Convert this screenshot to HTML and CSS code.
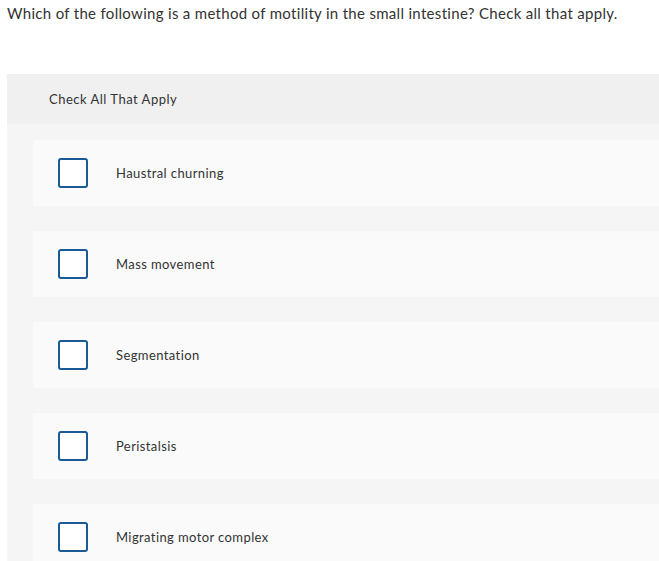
FILE: index.html
```html
<!DOCTYPE html>
<html>
<head>
<meta charset="utf-8">
<link rel="stylesheet" href="styles.css">
</head>
<body>
<p class="question">Which of the following is a method of motility in the small intestine? Check all that apply.</p>
<div class="panel">
  <div class="panel-head">Check All That Apply</div>
  <div class="panel-body">
    <label class="choice"><span class="box"></span><span class="label">Haustral churning</span></label>
    <label class="choice"><span class="box"></span><span class="label">Mass movement</span></label>
    <label class="choice"><span class="box"></span><span class="label">Segmentation</span></label>
    <label class="choice"><span class="box"></span><span class="label">Peristalsis</span></label>
    <label class="choice"><span class="box"></span><span class="label">Migrating motor complex</span></label>
  </div>
</div>
</body>
</html>
```
FILE: styles.css
```css
html, body {
  margin: 0;
  padding: 0;
  background: #ffffff;
  overflow: hidden;
}
body {
  padding: 0 0 0 7px;
  font-family: Lato, "Open Sans", sans-serif;
  color: #333333;
}
.question {
  margin: 0;
  padding-top: 4px;
  font-size: 15px;
  line-height: 18px;
  letter-spacing: 0.31px;
  height: 70px;
}
.panel {
  width: 652px;
}
.panel-head {
  background: #f0f0f0;
  height: 50px;
  display: flex;
  align-items: center;
  padding-left: 42px;
  font-size: 13px;
  letter-spacing: 0.5px;
}
.panel-body {
  background: #f5f5f5;
  padding: 16px 0 20px 26px;
  display: flex;
  flex-direction: column;
  gap: 25px;
}
.choice {
  background: #fafafa;
  height: 66px;
  display: flex;
  align-items: center;
  padding-left: 25px;
  font-size: 13px;
  letter-spacing: 0.4px;
}
.box {
  width: 26px;
  height: 26px;
  border: 2px solid #1a5a96;
  border-radius: 3px;
  background: #ffffff;
  flex: none;
}
.label {
  margin-left: 28px;
}
```
